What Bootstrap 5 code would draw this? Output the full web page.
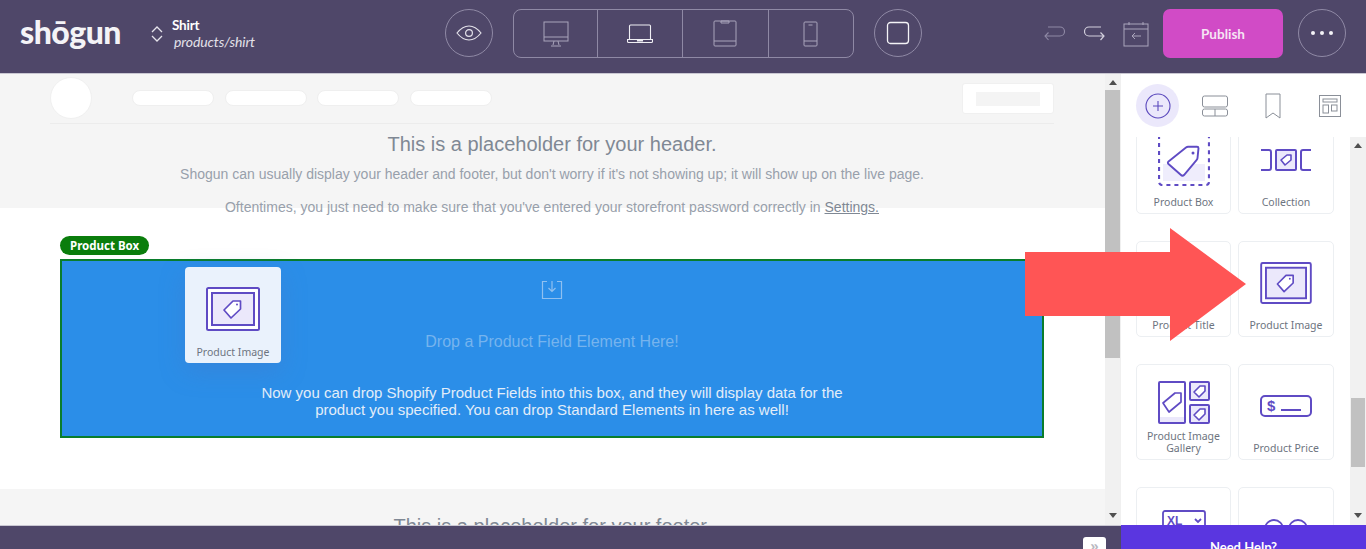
<!doctype html>
<html lang="en"><head><meta charset="utf-8"><title>Shogun</title>
<link href="https://cdn.jsdelivr.net/npm/bootstrap@5.3.0/dist/css/bootstrap.min.css" rel="stylesheet">
<style>
html,body{height:549px;overflow:hidden;background:#fff}
.app-root{height:549px;font-family:Lato,sans-serif;position:relative}
.topbar{height:74px;background:#4f4769;border-bottom:1px solid #c9c7d2;padding:9px 20px 0 20px;color:#fff}
.brand{font:900 32px/42px Lato,sans-serif;letter-spacing:-.5px;width:101px;margin-top:2px;color:#f4f3f7;white-space:nowrap}
.page-switch{margin-left:29px;width:295px;height:49px}
.page-switch b{font-size:13.5px;line-height:15px;display:block;font-weight:700;margin-top:2px;letter-spacing:-.2px}
.page-switch i{font-size:14px;line-height:18px;display:block;color:#e4e2ea;letter-spacing:-.1px;padding-left:2px}
.ring{width:48px;height:48px;border:1px solid #8f89a5;border-radius:50%;flex:none}
.devices{width:341px;height:49px;border:1px solid #8f89a5;border-radius:8px;margin:0 20px}
.devices>div{flex:1 1 0;border-left:1px solid #8f89a5}
.devices>div:first-child{border-left:0;flex:0 0 83px}
.history{margin-left:111px;width:130px;height:49px}
.history>span{width:41px}
.publish-btn{width:120px;height:49px;background:#d14bc6;border-radius:7px;font:700 13.5px Lato,sans-serif;color:#f6e4f4;border:0;margin-right:15px;padding:0}
.main-row{height:451px}
.stage{width:1105px;overflow:hidden}
.hdr{height:134px;background:#f5f5f5;padding:3px 51px 0 50px;text-align:center}
.skel-logo{width:42px;height:42px;border-radius:50%;background:#fff;border:1px solid #f0f0f0}
.skel-pill{width:82px;height:16px;border-radius:8px;background:#fff;border:1px solid #efefef}
.skel-pills{gap:10.5px;margin-left:40px;margin-top:13px}
.skel-box{width:92px;height:31px;background:#fff;border-radius:3px;padding:8px 13px;margin-top:6px;border:1px solid #f0f0f0}
.skel-box div{height:14px;background:#f4f4f4}
.skel-line{border-top:1px solid #ececec;margin-top:4px}
.hdr-title,.ftr-title{font:20px/24px "Liberation Sans",sans-serif;color:#7f8894;margin:0}
.hdr-title{margin-top:8px}
.hdr-text{font:14px/17px "Liberation Sans",sans-serif;color:#98a0ab;margin:10px 0 0}
.hdr-text+.hdr-text{margin-top:16px}
.hdr-text u{color:#7f8894}
.drop-wrap{height:281px;padding:28px 61px 0 60px}
.tag-pill{display:inline-block;height:19px;background:#0a7d0c;border-radius:10px;color:#fff;font:700 11.5px/19px "Noto Sans",sans-serif;padding:0 10px;margin-bottom:4px;vertical-align:top}
.drop-box{height:179px;background:#2b8ee8;border:2px solid #0a7d2c;text-align:center;padding-top:15px;margin-top:-1px}
.drop-title{font:16px/20px "Liberation Sans",sans-serif;color:#76b4ee;margin:32px 0 0}
.drop-text{font:15px/17px "Liberation Sans",sans-serif;color:#e2edf9;margin:32px 0 0}
.ftr{height:37px;background:#f5f5f5;text-align:center;padding-top:25px;overflow:hidden}
.track{width:15px;background:#f1f1f1;position:relative;flex:none}
.stage-thumb{margin-top:16px;height:268px;background:#c1c1c1}
.tri-up,.tri-dn{width:0;height:0;border-left:4px solid transparent;border-right:4px solid transparent;position:absolute;left:4px}
.tri-up{border-bottom:5px solid #505050;top:6px}
.tri-dn{border-top:5px solid #505050;bottom:7px}
.side{width:246px;border-left:1px solid #f0f0f0}
.side-tabs{height:63px;padding:10px 0 0 15px;gap:14.5px}
.side-tabs>div{width:43px;height:43px}
.plus-wrap{border-radius:50%;background:#ebe8fb}
.side-body{height:388px}
.side-list{flex:1;overflow:hidden;padding:0 16px 0 15px}
.tiles{display:grid;grid-template-columns:95px 96px;column-gap:7px;row-gap:27px;margin-top:-19px}
.tile{height:96px;border:1px solid #eceff2;border-radius:5px;background:#fff;text-align:center;color:#6d7480;font:10.5px/12px "Noto Sans",sans-serif;display:flex;flex-direction:column;align-items:center;justify-content:flex-end;padding-bottom:5px;position:relative}
.tile svg{position:absolute;left:50%;top:20px;transform:translateX(-50%)}
.tile svg.i-box{top:15px}
.tile svg.i-strip{top:29px}
.tile svg.i-price{top:30px}
.tile svg.i-gallery{top:16px}
.tile svg.i-xl{top:22px}
.side-track{width:16px;background:#f1f1f1;position:relative}
.side-thumb{position:absolute;left:1px;right:1px;top:261px;height:69px;background:#c1c1c1}
.bottom-row{height:24px;background:#4f4769;border-top:1px solid #c9c7d2}
.collapse-btn{width:23px;height:23px;background:#fff;border-radius:3px;margin:11px 15px 0 auto;color:#b8b8c0;font:700 15px/18px "Liberation Sans",sans-serif;text-align:center}
.help{width:245px;background:#5a36e0;color:#fff;font:700 13px/17px Lato,sans-serif;text-align:center;padding-top:14px;margin-top:-1px;overflow:hidden}
.drag-tile{position:absolute;left:185px;top:267px;width:96px;height:96px;background:#eaf2fc;border-radius:4px;box-shadow:0 8px 24px rgba(70,120,200,.4);text-align:center;color:#6d7480;font:10.5px/12px "Noto Sans",sans-serif;padding-top:20px}
.drag-tile svg{display:block;margin:0 auto 15px}
.big-arrow{position:absolute;left:1025px;top:228px}
</style></head>
<body>
<svg width="0" height="0" class="position-absolute">
<defs>
<symbol id="pimg" viewBox="0 0 54 44"><rect x="1" y="1" width="52" height="42" rx="1.500" fill="#fff" stroke="#5f4bc4" stroke-width="2"/><rect x="6" y="6" width="42" height="32" fill="#ebe8fb" stroke="#5f4bc4" stroke-width="2"/><path d="M18 23l9-9h7.500v8L25 31z" fill="#fff" stroke="#5f4bc4" stroke-width="1.700" stroke-linejoin="round"/><circle cx="31" cy="17.500" r="1" fill="#5f4bc4"/></symbol>
</defs>
</svg>
<div class="app-root d-flex flex-column">
  <header class="topbar d-flex align-items-start">
    <div class="brand">shōgun</div>
    <div class="page-switch d-flex align-items-center">
      <svg width="14" height="20" viewBox="0 0 14 20" class="me-2" fill="none" stroke="#e6e4ec" stroke-width="1.300"><path d="M2 8l5-5 5 5M2 12l5 5 5-5"/></svg>
      <div><b>Shirt</b><i>products/shirt</i></div>
    </div>
    <div class="ring d-flex align-items-center justify-content-center">
      <svg width="26" height="16" viewBox="0 0 26 16" fill="none" stroke="#e4e2ea" stroke-width="1.200"><path d="M1 8c4-5 8-7 12-7s8 2 12 7c-4 5-8 7-12 7S5 13 1 8z"/><circle cx="13" cy="8" r="3.400"/></svg>
    </div>
    <div class="devices d-flex">
      <div class="d-flex align-items-center justify-content-center"><svg width="26" height="26" viewBox="0 0 26 26" fill="none" stroke="#aaa5bc" stroke-width="1"><rect x="1" y="1" width="24" height="19"/><path d="M1 16h24M11 20l-1 4M15 20l1 4M8 25h10"/></svg></div>
      <div class="d-flex align-items-center justify-content-center"><svg width="26" height="20" viewBox="0 0 26 20" fill="none" stroke="#f0eff4" stroke-width="1.100"><path d="M2.500 15V2a1 1 0 0 1 1-1h19a1 1 0 0 1 1 1v13"/><path d="M.5 15.500h25v2a1 1 0 0 1-1 1h-23a1 1 0 0 1-1-1z"/><path d="M10.500 15.500h5v1.500h-5z" fill="#f0eff4"/></svg></div>
      <div class="d-flex align-items-center justify-content-center"><svg width="24" height="27" viewBox="0 0 24 27" fill="none" stroke="#aaa5bc" stroke-width="1"><rect x="1" y="1" width="22" height="25" rx="1"/><path d="M1 21h22M8 1h8v2H8z"/></svg></div>
      <div class="d-flex align-items-center justify-content-center"><svg width="15" height="26" viewBox="0 0 15 26" fill="none" stroke="#aaa5bc" stroke-width="1"><rect x="1" y="1" width="13" height="24" rx="1"/><path d="M1 20h13M5.500 4h4M7.500 22.500h.1"/></svg></div>
    </div>
    <div class="ring d-flex align-items-center justify-content-center">
      <svg width="24" height="24" viewBox="0 0 24 24" fill="none" stroke="#f4f3f7" stroke-width="1.300"><rect x="1.500" y="1.500" width="21" height="21" rx="3"/></svg>
    </div>
    <div class="history d-flex align-items-center">
      <span class="d-flex justify-content-center"><svg width="22" height="16" viewBox="0 0 22 16" fill="none" stroke="#8f89a5" stroke-width="1.100"><path d="M5 1h12a4 4 0 0 1 0 9H2M5.500 6.500L2 10l3.500 4"/></svg></span>
      <span class="d-flex justify-content-center"><svg width="22" height="16" viewBox="0 0 22 16" fill="none" stroke="#d3d0dd" stroke-width="1.200"><path d="M17 1H5a4 4 0 0 0 0 9h15M16.500 6.500L20 10l-3.500 4"/></svg></span>
      <span class="d-flex justify-content-center"><svg width="26" height="26" viewBox="0 0 26 26" fill="none" stroke="#aaa5bc" stroke-width="1"><rect x="1" y="3" width="24" height="22"/><path d="M1 8h24M6 1v3M20 1v3M18 15H9M12 12l-3 3 3 3"/></svg></span>
    </div>
    <button class="publish-btn" type="button">Publish</button>
    <div class="ring d-flex align-items-center justify-content-center">
      <svg width="24" height="6" viewBox="0 0 24 6" fill="#f4f3f7"><circle cx="3" cy="3" r="2"/><circle cx="12" cy="3" r="2"/><circle cx="21" cy="3" r="2"/></svg>
    </div>
  </header>

  <div class="main-row d-flex">
    <main class="stage">
      <section class="hdr">
        <div class="d-flex align-items-start">
          <div class="skel-logo"></div>
          <div class="skel-pills d-flex"><div class="skel-pill"></div><div class="skel-pill"></div><div class="skel-pill"></div><div class="skel-pill"></div></div>
          <div class="skel-box ms-auto"><div></div></div>
        </div>
        <div class="skel-line"></div>
        <p class="hdr-title">This is a placeholder for your header.</p>
        <p class="hdr-text">Shogun can usually display your header and footer, but don't worry if it's not showing up; it will show up on the live page.</p>
        <p class="hdr-text">Oftentimes, you just need to make sure that you've entered your storefront password correctly in <u>Settings.</u></p>
      </section>
      <section class="drop-wrap">
        <span class="tag-pill">Product Box</span>
        <div class="drop-box">
          <svg width="22" height="20" viewBox="0 0 22 20" fill="none" stroke="#8fc0f0" stroke-width="1.200"><path d="M6 1.500H1.500v17h19v-17H16M11 1v10M7.500 8l3.500 3.500L14.500 8"/></svg>
          <p class="drop-title">Drop a Product Field Element Here!</p>
          <p class="drop-text">Now you can drop Shopify Product Fields into this box, and they will display data for the<br>product you specified. You can drop Standard Elements in here as well!</p>
        </div>
      </section>
      <section class="ftr"><p class="ftr-title">This is a placeholder for your footer.</p></section>
    </main>
    <div class="track"><span class="tri-up"></span><div class="stage-thumb"></div><span class="tri-dn"></span></div>
    <aside class="side d-flex flex-column">
      <div class="side-tabs d-flex align-items-start">
        <div class="plus-wrap d-flex align-items-center justify-content-center"><svg width="26" height="26" viewBox="0 0 26 26" fill="none" stroke="#5b49bd" stroke-width="1.100"><circle cx="13" cy="13" r="12"/><path d="M13 8v10M8 13h10"/></svg></div>
        <div class="d-flex align-items-center justify-content-center"><svg width="26" height="22" viewBox="0 0 26 22" fill="none" stroke="#8a8f98" stroke-width="1"><rect x=".500" y="1" width="25" height="11" rx="2"/><rect x=".500" y="14" width="25" height="7" rx="2"/><path d="M13 14v7"/></svg></div>
        <div class="d-flex align-items-center justify-content-center"><svg width="16" height="26" viewBox="0 0 16 26" fill="none" stroke="#8a8f98" stroke-width="1"><path d="M1 1h14v24l-7-5-7 5z"/></svg></div>
        <div class="d-flex align-items-center justify-content-center"><svg width="22" height="22" viewBox="0 0 22 22" fill="none" stroke="#8a8f98" stroke-width="1"><rect x=".500" y=".500" width="21" height="21"/><rect x="4" y="4" width="14" height="3"/><rect x="4" y="10" width="5.500" height="8"/><rect x="12.500" y="10" width="5.500" height="6"/></svg></div>
      </div>
      <div class="side-body d-flex">
        <div class="side-list">
          <div class="tiles">
            <div class="tile"><svg class="i-box" width="52" height="52" viewBox="0 0 52 52" fill="none"><path d="M5 30h42v17H5z" fill="#ebe8fb" opacity=".8"/><path d="M1 1v47a3 3 0 0 0 3 3h44a3 3 0 0 0 3-3V1" stroke="#5f4bc4" stroke-width="2.200" stroke-dasharray="4 4"/><path d="M10.500 27.500L28 13.500q1-.8 2-.8h9q1.500 0 1.500 1.500l-1 10q-.1 1-1 2L26 41q-1.500 1.500-3 0L10.500 30q-1.300-1.300 0-2.500z" fill="#fff" stroke="#5f4bc4" stroke-width="1.900"/><circle cx="35" cy="19" r="1.500" fill="#5f4bc4"/></svg>Product Box</div>
            <div class="tile"><svg class="i-strip" width="52" height="24" viewBox="0 0 52 24" fill="none" stroke="#5f4bc4" stroke-width="2"><path d="M1 2h8a2 2 0 0 1 2 2v16a2 2 0 0 1-2 2H1M51 2h-8a2 2 0 0 0-2 2v16a2 2 0 0 0 2 2h8"/><rect x="16" y="2" width="20" height="20" rx="1" fill="#ebe8fb"/><path d="M21 12l6-5h4v5l-6 5z" fill="#fff" stroke-width="1.600" stroke-linejoin="round"/></svg>Collection</div>
            <div class="tile">Product Title</div>
            <div class="tile"><svg width="52" height="42"><use href="#pimg"/></svg>Product Image</div>
            <div class="tile"><svg class="i-gallery" width="52" height="44" viewBox="0 0 52 44" fill="none" stroke="#5f4bc4" stroke-width="2"><rect x="1" y="1" width="26" height="41" rx="1" fill="#fff"/><path d="M2 36h24v5H2z" fill="#ebe8fb" stroke="none"/><path d="M5 22l12-10h6v9L11 31z" fill="#fff" stroke-width="1.700" stroke-linejoin="round"/><rect x="32" y="1" width="19" height="18" rx="1" fill="#ebe8fb"/><path d="M36 11l6-6h5v5l-6 6z" fill="#fff" stroke-width="1.600" stroke-linejoin="round"/><rect x="32" y="24" width="19" height="18" rx="1" fill="#ebe8fb"/><path d="M36 34l6-6h5v5l-6 6z" fill="#fff" stroke-width="1.600" stroke-linejoin="round"/></svg><span>Product Image<br>Gallery</span></div>
            <div class="tile"><svg class="i-price" width="52" height="22" viewBox="0 0 52 22" fill="none" stroke="#5f4bc4" stroke-width="2"><rect x="1" y="1" width="50" height="20" rx="4" fill="#fff"/><path d="M21 15h20"/><text x="7" y="16" font-family="Liberation Sans" font-size="15" font-weight="700" fill="#5f4bc4" stroke="none">$</text></svg>Product Price</div>
            <div class="tile"><svg class="i-xl" width="44" height="24" viewBox="0 0 44 24" fill="none" stroke="#5f4bc4" stroke-width="1.800"><rect x="1" y="1" width="42" height="22" rx="2"/><path d="M33 9l3 3 3-3"/><text x="5" y="15" font-family="Liberation Sans" font-size="12" font-weight="700" fill="#5f4bc4" stroke="none">XL</text></svg></div>
            <div class="tile"><svg class="i-strip" width="46" height="24" viewBox="0 0 46 24" fill="none" stroke="#5f4bc4" stroke-width="1.800"><circle cx="11" cy="12" r="9"/><circle cx="35" cy="12" r="9"/><path d="M7 12h8M35 8v8M31 12h8"/></svg></div>
          </div>
        </div>
        <div class="side-track"><span class="tri-up"></span><div class="side-thumb"></div><span class="tri-dn"></span></div>
      </div>
    </aside>
  </div>

  <div class="bottom-row d-flex">
    <div class="flex-grow-1 d-flex overflow-hidden"><div class="collapse-btn">»</div></div>
    <div class="help">Need Help?</div>
  </div>

  <div class="drag-tile"><svg width="54" height="44"><use href="#pimg"/></svg>Product Image</div>
  <svg class="big-arrow" width="222" height="114" viewBox="0 0 222 114"><path d="M0 24h145V0l76 56-76 57V88H0z" fill="#ff5555"/></svg>
</div>
</body></html>
